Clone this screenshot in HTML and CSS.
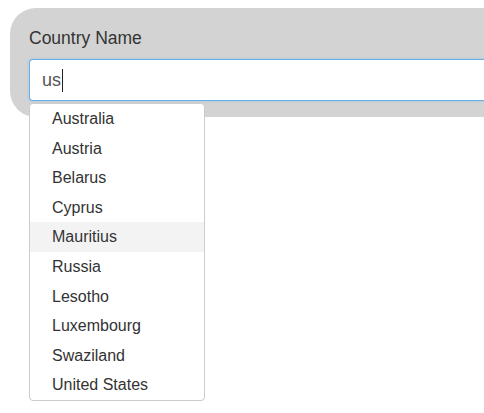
FILE: index.html
```html
<!DOCTYPE html>
<html>
<head>
<meta charset="utf-8">
<link rel="stylesheet" href="styles.css">
</head>
<body>
<div class="panel">
  <label class="label">Country Name</label>
  <div class="field">
    <div class="input"><span class="value">us</span><span class="caret"></span></div>
    <ul class="menu">
      <li class="item">Australia</li>
      <li class="item">Austria</li>
      <li class="item">Belarus</li>
      <li class="item">Cyprus</li>
      <li class="item active">Mauritius</li>
      <li class="item">Russia</li>
      <li class="item">Lesotho</li>
      <li class="item">Luxembourg</li>
      <li class="item">Swaziland</li>
      <li class="item">United States</li>
    </ul>
  </div>
</div>
</body>
</html>
```
FILE: styles.css
```css
html, body {
  margin: 0;
  padding: 0;
  background: #fff;
}
body {
  min-height: 413px;
  font-family: "Liberation Sans", Arial, sans-serif;
  color: #333;
}
.panel {
  margin: 8px 0 0 10px;
  height: 109px;
  box-sizing: border-box;
  padding: 20px 0 0 19px;
  background: #d3d3d3;
  border-radius: 26px 0 0 26px;
}
.label {
  display: block;
  font-size: 17.5px;
  line-height: 20px;
  margin-bottom: 11px;
}
.field {
  position: relative;
}
.input {
  height: 42px;
  box-sizing: border-box;
  border: 1px solid #66afe9;
  border-right: none;
  border-radius: 4px 0 0 4px;
  background: #fff;
  padding: 0 12px;
  display: flex;
  align-items: center;
  font-size: 18px;
  color: #555;
  box-shadow: 0 0 3px rgba(102, 175, 233, 0.45);
}
.caret {
  display: inline-block;
  width: 1px;
  height: 23px;
  background: #222;
  margin-left: 1px;
}
.menu {
  position: absolute;
  top: 44px;
  left: 0;
  width: 176px;
  box-sizing: border-box;
  margin: 0;
  padding: 0;
  list-style: none;
  background: #fff;
  border: 1px solid #ccc;
  border-radius: 4px;
  z-index: 2;
}
.item {
  font-size: 16px;
  line-height: 19.6px;
  padding: 5px 0 5px 22px;
  color: #333;
}
.item.active {
  background: #f3f3f3;
}
```
